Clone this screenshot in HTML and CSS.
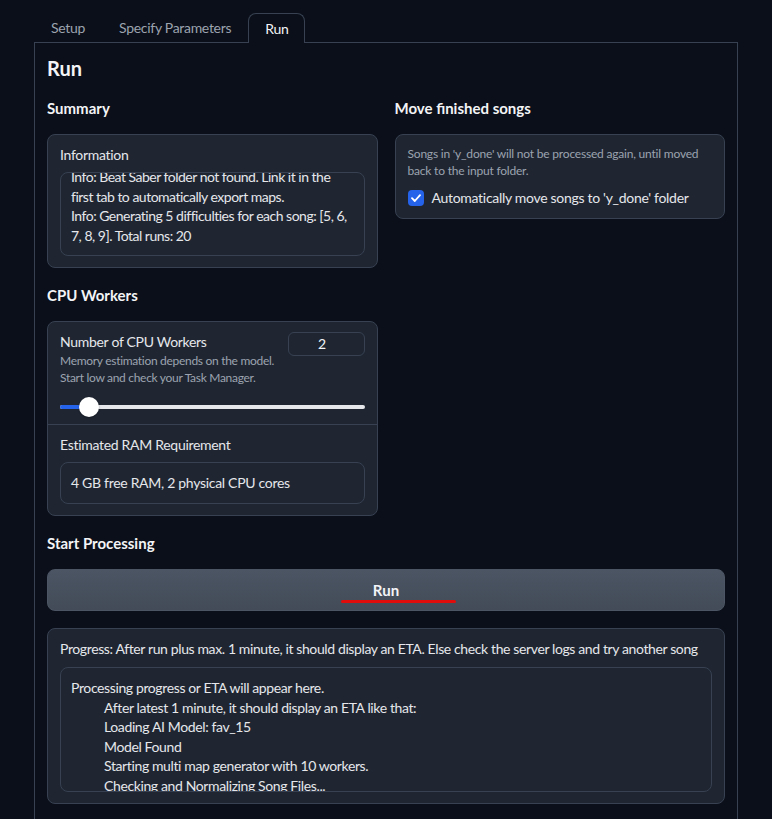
FILE: index.html
```html
<!DOCTYPE html>
<html lang="en">
<head>
    <meta charset="UTF-8">
    <meta name="viewport" content="width=device-width, initial-scale=1.0">
    <title>Run</title>
    <link rel="stylesheet" href="styles.css">
</head>
<body>
    <div class="container">
        <div class="tabs">
            <button class="tab">Setup</button>
            <button class="tab">Specify Parameters</button>
            <button class="tab active">Run</button>
        </div>

        <div class="panel">
            <h1>Run</h1>

            <div class="columns">
                <div class="column">
                    <h2>Summary</h2>
                    <div class="block">
                        <div class="label">Information</div>
                        <div class="textbox summary-box">
                            <div class="scroll-up">
                                Info: Beat Saber folder not found. Link it in the first tab to automatically export maps.<br>
                                Info: Generating 5 difficulties for each song: [5, 6, 7, 8, 9]. Total runs: 20
                            </div>
                        </div>
                    </div>
                </div>

                <div class="column">
                    <h2>Move finished songs</h2>
                    <div class="block">
                        <p class="info">Songs in 'y_done' will not be processed again, until moved back to the input folder.</p>
                        <label class="checkbox">
                            <span class="check">
                                <svg width="10" height="8" viewBox="0 0 10 8"><path d="M1 4.2 3.8 7 9 1.2" fill="none" stroke="#fff" stroke-width="1.8" stroke-linecap="round" stroke-linejoin="round"/></svg>
                            </span>
                            Automatically move songs to 'y_done' folder
                        </label>
                    </div>
                </div>
            </div>

            <div class="columns">
                <div class="column">
                    <h2>CPU Workers</h2>
                    <div class="block split">
                        <div class="slider-part">
                            <div class="slider-head">
                                <div>
                                    <div class="label">Number of CPU Workers</div>
                                    <p class="info">Memory estimation depends on the model.<br>Start low and check your Task Manager.</p>
                                </div>
                                <div class="number">2</div>
                            </div>
                            <div class="slider">
                                <div class="slider-fill"></div>
                                <div class="slider-thumb"></div>
                            </div>
                        </div>
                        <div class="ram-part">
                            <div class="label">Estimated RAM Requirement</div>
                            <div class="textbox ram-box">4 GB free RAM, 2 physical CPU cores</div>
                        </div>
                    </div>
                </div>
                <div class="column"></div>
            </div>

            <h2>Start Processing</h2>
            <button class="run-button">Run<span class="mark"></span></button>

            <div class="block progress">
                <div class="label">Progress: After run plus max. 1 minute, it should display an ETA. Else check the server logs and try another song</div>
                <div class="textbox progress-box">
                    Processing progress or ETA will appear here.<br>
                    <span class="indent">After latest 1 minute, it should display an ETA like that:</span><br>
                    <span class="indent">Loading AI Model: fav_15</span><br>
                    <span class="indent">Model Found</span><br>
                    <span class="indent">Starting multi map generator with 10 workers.</span><br>
                    <span class="indent">Checking and Normalizing Song Files...</span><br>
                    <span class="indent">Generating maps...</span>
                </div>
            </div>
        </div>
    </div>
</body>
</html>
```

FILE: styles.css
```css
* {
    margin: 0;
    padding: 0;
    box-sizing: border-box;
}

body {
    font-family: Lato, 'Noto Sans', sans-serif;
    background: #0b0f19;
    color: #e5e7eb;
    font-size: 14px;
    letter-spacing: -0.3px;
    overflow: hidden;
}

.container {
    width: 738px;
    padding: 13px 0 0 34px;
}

/* tab strip */
.tabs {
    display: flex;
    height: 29px;
}

.tab {
    background: none;
    border: 1px solid transparent;
    border-bottom: none;
    border-radius: 8px 8px 0 0;
    padding: 0 16px;
    font-family: inherit;
    font-size: 14px;
    letter-spacing: -0.3px;
    color: #9ca3af;
    line-height: 26px;
}

.tab.active {
    color: #f3f4f6;
    border-color: #374151;
    background: #0b0f19;
    margin-bottom: -1px;
    height: 30px;
}

.panel {
    border: 1px solid #374151;
    border-bottom: none;
    padding: 8px 12px 12px;
    min-height: 800px;
}

h1 {
    font-size: 20px;
    font-weight: 700;
    letter-spacing: 0;
    color: #f3f4f6;
    line-height: 34px;
    margin-bottom: 11px;
}

h2 {
    font-size: 15px;
    font-weight: 700;
    letter-spacing: 0;
    color: #f3f4f6;
    line-height: 24px;
    margin-bottom: 14px;
}

.columns {
    display: grid;
    grid-template-columns: 1fr 1fr;
    gap: 17px;
    margin-bottom: 15px;
}

.block {
    background: #1f2632;
    border: 1px solid #374151;
    border-radius: 8px;
    padding: 10px 12px 11px;
}

.label {
    font-size: 14px;
    color: #e5e7eb;
    line-height: 19px;
    margin-bottom: 8px;
}

.info {
    font-size: 12px;
    color: #9ca3af;
    line-height: 17px;
    letter-spacing: -0.2px;
}

.textbox {
    border: 1px solid #374151;
    border-radius: 8px;
    background: #1f2632;
    padding: 9px 10px;
    line-height: 19.6px;
    font-size: 14px;
    color: #e5e7eb;
    overflow: hidden;
}

.summary-box {
    height: 84px;
    padding: 0 11px 0 10px;
    letter-spacing: -0.5px;
}

.scroll-up {
    margin-top: -6px;
}

.checkbox {
    display: flex;
    align-items: center;
    gap: 8px;
    margin-top: 10px;
    font-size: 14px;
    color: #e5e7eb;
    padding-bottom: 1px;
}

.check {
    width: 16px;
    height: 16px;
    border-radius: 4px;
    background: #2563eb;
    display: flex;
    align-items: center;
    justify-content: center;
}

/* slider block */
.block.split {
    padding: 0;
}

.slider-part {
    padding: 10px 12px 15px;
    border-bottom: 1px solid #374151;
}

.slider-head {
    display: flex;
    justify-content: space-between;
    align-items: flex-start;
}

.slider-head .label {
    margin-bottom: 1px;
}

.slider-head .info {
    letter-spacing: -0.3px;
}

.number {
    width: 77px;
    height: 24px;
    border: 1px solid #374151;
    border-radius: 6px;
    text-align: center;
    padding-right: 8px;
    line-height: 22px;
    font-size: 14px;
    color: #f3f4f6;
}

.slider {
    position: relative;
    height: 4px;
    border-radius: 2px;
    background: #e5e7eb;
    margin-top: 19px;
}

.slider-fill {
    width: 29px;
    height: 4px;
    border-radius: 2px 0 0 2px;
    background: #2563eb;
}

.slider-thumb {
    position: absolute;
    left: 19px;
    top: -8px;
    width: 20px;
    height: 20px;
    border-radius: 50%;
    background: #fff;
    box-shadow: 0 1px 2px rgba(0,0,0,0.3);
}

.ram-part {
    padding: 10px 12px 11px;
}

.ram-box {
    height: 42px;
    padding: 10px 10px;
}

/* run button */
.run-button {
    display: block;
    position: relative;
    width: 100%;
    height: 42px;
    border: 1px solid #4b5563;
    border-radius: 8px;
    background: linear-gradient(to bottom, #4b5563, #434b58);
    color: #f3f4f6;
    font-family: inherit;
    font-size: 15px;
    font-weight: 700;
    margin-bottom: 17px;
}

.mark {
    position: absolute;
    left: 293px;
    top: 30px;
    width: 115px;
    height: 3px;
    border-radius: 2px;
    background: #e00c0c;
}

.progress {
    letter-spacing: -0.38px;
}

.progress .label {
    margin-bottom: 9px;
}

.progress-box {
    height: 125px;
    padding: 10px 10px;
}

.indent {
    padding-left: 33px;
}
```
